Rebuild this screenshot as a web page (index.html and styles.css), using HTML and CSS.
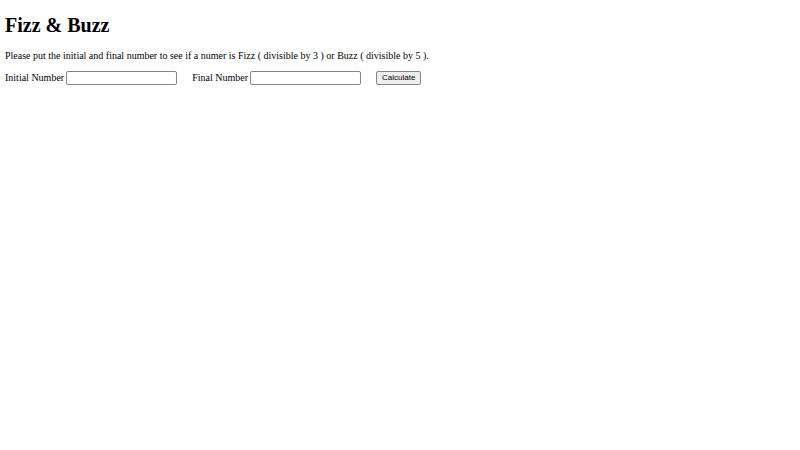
FILE: index.html
```html
<!DOCTYPE html>
<html lang="en">
<head>
<meta charset="utf-8">
<title>Fizz &amp; Buzz</title>
<link rel="stylesheet" href="styles.css">
</head>
<body>
<h1>Fizz &amp; Buzz</h1>
<p>Please put the initial and final number to see if a numer is Fizz ( divisible by 3 ) or Buzz ( divisible by 5 ).</p>
<form class="range" action="#">
<div class="field"><label for="initial">Initial Number</label><input id="initial" type="text"></div>
<div class="field"><label for="final">Final Number</label><input id="final" type="text"></div>
<button type="button">Calculate</button>
</form>
</body>
</html>
```
FILE: styles.css
```css
body {
  margin: 14px 5px;
  background: #fff;
  color: #000;
  font: 10px/12px "Liberation Serif", serif;
}

h1 {
  margin: 0 0 13px;
  font-size: 20px;
  line-height: 23px;
}

p {
  margin: 0 0 9px;
}

.range {
  display: flex;
  flex-wrap: wrap;
  align-items: center;
  gap: 15px;
}

.field {
  display: flex;
  align-items: center;
  gap: 2px;
}

input {
  box-sizing: border-box;
  width: 111px;
  height: 14px;
  margin: 0;
  padding: 1px;
  border: 1px solid #858585;
  border-radius: 2px;
  font: 8px "Liberation Sans", sans-serif;
}

button {
  box-sizing: border-box;
  height: 14px;
  margin: 0;
  padding: 0 5px;
  border: 1px solid #858585;
  border-radius: 2px;
  background: #efefef;
  color: #000;
  font: 8px/12px "Liberation Sans", sans-serif;
}
```
